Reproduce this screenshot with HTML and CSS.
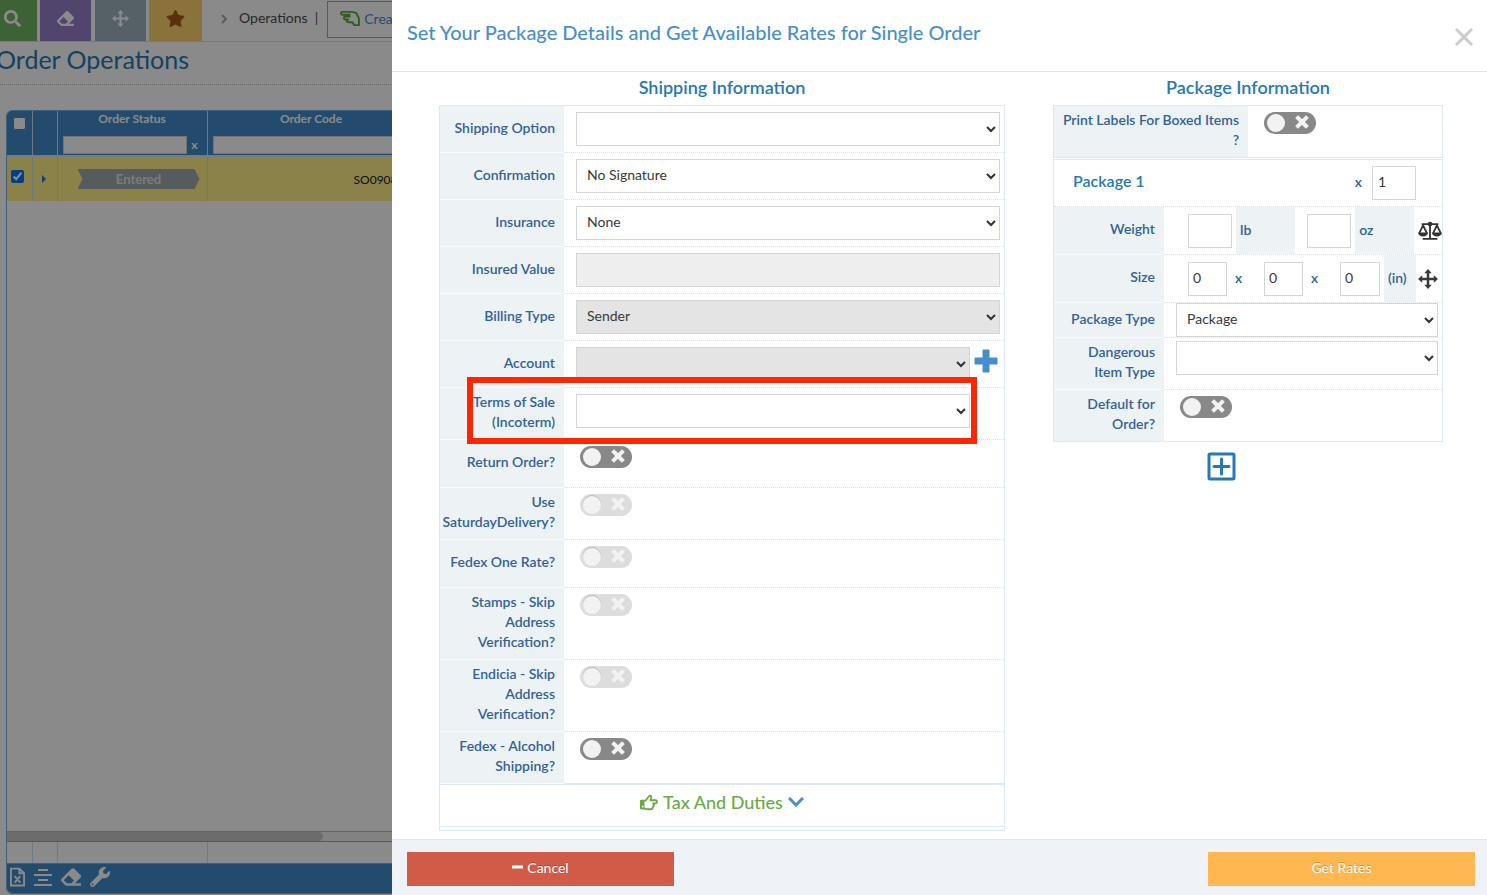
FILE: index.html
```
<!DOCTYPE html>
<html lang="en">
<head>
    <meta charset="UTF-8">
    <meta name="viewport" content="width=device-width, initial-scale=1.0">
    <title>Order Operations</title>
    <link rel="stylesheet" href="styles.css">
</head>
<body>
    <!-- Shared icons -->
    <svg class="sprite" aria-hidden="true">
        <symbol id="i-search" viewBox="0 0 512 512"><path d="M505 442.7L405.3 343c-4.5-4.5-10.6-7-17-7H372c27.6-35.3 44-79.7 44-128C416 93.1 322.9 0 208 0S0 93.1 0 208s93.1 208 208 208c48.3 0 92.7-16.4 128-44v16.3c0 6.4 2.5 12.5 7 17l99.7 99.7c9.4 9.4 24.6 9.4 33.9 0l28.3-28.3c9.4-9.4 9.4-24.6.1-34zM208 336c-70.7 0-128-57.2-128-128 0-70.7 57.2-128 128-128 70.7 0 128 57.2 128 128 0 70.7-57.2 128-128 128z"/></symbol>
        <symbol id="i-eraser" viewBox="0 0 512 512"><path d="M497.9 273.9c18.8-18.7 18.8-49.1 0-67.8l-160-160c-18.7-18.8-49.1-18.8-67.9 0l-256 256c-18.7 18.7-18.7 49.1 0 67.8l96 96A48 48 0 0 0 144 480h356c6.6 0 12-5.4 12-12v-40c0-6.6-5.4-12-12-12H355.9l142-142.1zM195.3 211.3l137.4 137.4L265.4 416H150.6l-80-80 124.7-124.7z"/></symbol>
        <symbol id="i-move" viewBox="0 0 24 24"><path d="M12 0l4.500 5h-3v5.500H19v-3l5 4.500-5 4.500v-3h-5.500V19h3L12 24l-4.500-5h3v-5.500H5v3L0 12l5-4.500v3h5.500V5h-3z"/></symbol>
        <symbol id="i-star" viewBox="0 0 576 512"><path d="M259.3 17.8L194 150.2 47.9 171.5c-26.2 3.8-36.7 36.1-17.7 54.6l105.7 103-25 145.500c-4.500 26.300 23.200 46 46.400 33.700L288 439.600l130.700 68.700c23.200 12.200 50.900-7.400 46.400-33.700l-25-145.500 105.700-103c19-18.500 8.500-50.800-17.700-54.600L382 150.200 316.700 17.800c-11.700-23.600-45.600-23.900-57.400 0z"/></symbol>
        <symbol id="i-wrench" viewBox="0 0 512 512"><path d="M507.700 109.100c-2.200-9-13.500-12.100-20.100-5.500l-74.400 74.400-67.900-11.300-11.300-67.900 74.400-74.400c6.600-6.600 3.400-17.900-5.700-20.200-47.400-11.700-99.600.9-136.600 37.900-39.600 39.600-50.500 97.100-34 147.200L18.700 402.800c-25 25-25 65.500 0 90.500s65.500 25 90.500 0l213.200-213.200c50.100 16.700 107.500 5.700 147.400-34.200 37.100-37.100 49.700-89.400 37.900-136.800zM64 472a24 24 0 1 1 0-48 24 24 0 0 1 0 48z"/></symbol>
        <symbol id="i-chevron" viewBox="0 0 16 10"><path d="M1 1l7 7 7-7" fill="none" stroke="currentColor" stroke-width="3"/></symbol>
    </svg>

    <div class="page">
        <div class="toolbar">
            <button class="tool tool-search" aria-label="Search"><svg><use href="#i-search"/></svg></button>
            <button class="tool tool-clear" aria-label="Clear"><svg><use href="#i-eraser"/></svg></button>
            <button class="tool tool-move" aria-label="Move"><svg><use href="#i-move"/></svg></button>
            <button class="tool tool-star" aria-label="Favorite"><svg class="star"><use href="#i-star"/></svg></button>
            <svg class="crumb-arrow" viewBox="0 0 8 10"><path d="M1 1l4 4-4 4" fill="none" stroke="#a3a7ae" stroke-width="2"/></svg>
            <span class="crumb">Operations&nbsp; |</span>
            <button class="create">
                <svg viewBox="0 0 22 18"><path d="M1 2h11l5 1 3 6v7h-5l-2-3H8.500a1.500 1.500 0 0 1 0-3h-3a1.500 1.500 0 0 1 0-3H11M2 2a1.500 1.500 0 0 0 1 3h8" fill="none" stroke="#5fa83e" stroke-width="2" stroke-linejoin="round"/></svg>
                Create
            </button>
        </div>
        <h1>Order Operations</h1>

        <div class="grid-box">
            <table class="grid">
                <thead>
                    <tr>
                        <th class="c-check" rowspan="2"><input type="checkbox" aria-label="Select all"></th>
                        <th class="c-sub" rowspan="2"></th>
                        <th class="c-status">Order Status</th>
                        <th class="c-code">Order Code</th>
                        <th></th>
                    </tr>
                    <tr class="filters">
                        <td><div><input type="text" aria-label="Filter status"><button>x</button></div></td>
                        <td><div><input type="text" aria-label="Filter code"></div></td>
                        <td></td>
                    </tr>
                </thead>
                <tbody>
                    <tr>
                        <td class="c-check"><input type="checkbox" aria-label="Select order" checked></td>
                        <td><span class="expand"></span></td>
                        <td><span class="status">Entered</span></td>
                        <td class="code">SO09080</td>
                        <td></td>
                    </tr>
                </tbody>
            </table>
            <div class="grid-space"></div>
            <div class="scrollbar"><div class="thumb"></div></div>
            <div class="totals"><i></i><i></i><i></i></div>
            <div class="pager">
                <svg viewBox="0 0 16 20" class="file"><path d="M1 1h9l5 5v13H1zM10 1v5h5M5 9l6 7M11 9l-6 7" fill="none" stroke="currentColor" stroke-width="2"/></svg>
                <svg viewBox="0 0 18 18" class="lines"><path d="M4 2h10M0 7h18M4 12h10M0 17h18" fill="none" stroke="currentColor" stroke-width="2"/></svg>
                <svg class="eraser"><use href="#i-eraser"/></svg>
                <svg class="wrench"><use href="#i-wrench"/></svg>
            </div>
        </div>
    </div>
    <div class="backdrop"></div>

    <div class="modal" role="dialog" aria-labelledby="modal-title">
        <header class="modal-header">
            <h2 id="modal-title">Set Your Package Details and Get Available Rates for Single Order</h2>
            <button class="close" aria-label="Close"><svg viewBox="0 0 18 18"><path d="M1 1l16 16M17 1L1 17" fill="none" stroke="#ccc" stroke-width="3"/></svg></button>
        </header>

        <div class="modal-body">
            <section>
                <h3>Shipping Information</h3>
                <div class="panel">
                    <div class="row"><label for="option">Shipping Option</label><div class="cell"><select id="option"><option></option></select></div></div>
                    <div class="row"><label for="confirmation">Confirmation</label><div class="cell"><select id="confirmation"><option>No Signature</option></select></div></div>
                    <div class="row"><label for="insurance">Insurance</label><div class="cell"><select id="insurance"><option>None</option></select></div></div>
                    <div class="row"><label for="insured">Insured Value</label><div class="cell"><input type="text" id="insured" disabled></div></div>
                    <div class="row"><label for="billing">Billing Type</label><div class="cell"><select id="billing" disabled><option>Sender</option></select></div></div>
                    <div class="row">
                        <label for="account">Account</label>
                        <div class="cell side">
                            <select id="account" disabled><option></option></select>
                            <button class="add" aria-label="Add account"><svg viewBox="0 0 24 24"><path d="M9 1h6v8h8v6h-8v8H9v-8H1V9h8z" fill="#478fca" stroke="#478fca" stroke-linejoin="round"/></svg></button>
                        </div>
                    </div>
                    <div class="row marked">
                        <label for="terms">Terms of Sale (Incoterm)</label>
                        <div class="cell side"><select id="terms"><option></option></select></div>
                        <div class="marker"></div>
                    </div>
                    <div class="row"><label for="return">Return Order?</label><div class="cell"><input type="checkbox" class="switch" id="return"></div></div>
                    <div class="row"><label for="saturday">Use SaturdayDelivery?</label><div class="cell"><input type="checkbox" class="switch" id="saturday" disabled></div></div>
                    <div class="row"><label for="onerate">Fedex One Rate?</label><div class="cell"><input type="checkbox" class="switch" id="onerate" disabled></div></div>
                    <div class="row"><label for="stamps">Stamps - Skip Address Verification?</label><div class="cell"><input type="checkbox" class="switch" id="stamps" disabled></div></div>
                    <div class="row"><label for="endicia">Endicia - Skip Address Verification?</label><div class="cell"><input type="checkbox" class="switch" id="endicia" disabled></div></div>
                    <div class="row last"><label for="alcohol">Fedex - Alcohol Shipping?</label><div class="cell"><input type="checkbox" class="switch" id="alcohol"></div></div>
                    <button class="tax">
                        <svg class="hand" viewBox="0 0 20 18"><path d="M1 7h4v9H1z" fill="#69aa46"/><path d="M1 7h5l4-5c1-1.500 3 0 2.500 1.500L11.500 6.500H17c2.500 0 2.500 3.500 0 3.500h-2.500c1.500 0 1.500 2.500 0 2.500 1 .5.5 2.200-.5 2.200 0 1.300-.8 1.800-2 1.800H9c-2 0-2.500-.8-4-.8H1z" fill="none" stroke="#69aa46" stroke-width="2" stroke-linejoin="round"/><circle cx="3" cy="13.500" r="1" fill="#fff"/></svg>
                        Tax And Duties
                        <svg class="down"><use href="#i-chevron"/></svg>
                    </button>
                </div>
            </section>

            <section>
                <h3>Package Information</h3>
                <div class="panel">
                    <div class="row wide"><label for="boxed">Print Labels For Boxed Items ?</label><div class="cell"><input type="checkbox" class="switch" id="boxed"></div></div>
                </div>
                <div class="panel package">
                    <div class="package-head">
                        <h4>Package 1</h4>
                        <label for="count">x</label>
                        <input type="text" id="count" value="1">
                    </div>
                    <div class="row">
                        <label for="lb">Weight</label>
                        <div class="measure">
                            <input type="text" id="lb">
                            <label class="unit" for="lb">lb</label>
                            <input type="text" id="oz">
                            <label class="unit" for="oz">oz</label>
                            <svg class="scale" viewBox="0 0 26 20"><path d="M4 2.500h18M13 2v16M5 18.500h16" fill="none" stroke="#333" stroke-width="2"/><circle cx="13" cy="2.500" r="2.500" fill="#333"/><path d="M5.500 4L1.500 12M5.500 4l4 8M20.500 4l-4 8M20.500 4l4 8" fill="none" stroke="#333" stroke-width="2"/><path d="M0 11.500h11a5.500 4.500 0 0 1-11 0zM15 11.500h11a5.500 4.500 0 0 1-11 0z" fill="#333"/></svg>
                        </div>
                    </div>
                    <div class="row">
                        <label for="length">Size</label>
                        <div class="measure size">
                            <input type="text" id="length" value="0"><span>x</span>
                            <input type="text" aria-label="Width" value="0"><span>x</span>
                            <input type="text" aria-label="Height" value="0">
                            <span class="unit">(in)</span>
                            <svg class="move"><use href="#i-move"/></svg>
                        </div>
                    </div>
                    <div class="row tight"><label for="type">Package Type</label><div class="cell"><select id="type"><option>Package</option></select></div></div>
                    <div class="row danger"><label for="danger">Dangerous Item Type</label><div class="cell"><select id="danger"><option></option></select></div></div>
                    <div class="row"><label for="default">Default for Order?</label><div class="cell"><input type="checkbox" class="switch" id="default"></div></div>
                </div>
                <div class="more">
                    <button aria-label="Add package"><svg viewBox="0 0 29 29"><g fill="none" stroke="#2679b5" stroke-width="3"><rect x="2" y="2" width="25" height="25" rx="1"/><path d="M14.500 7v15M7 14.500h15" stroke-linecap="round"/></g></svg></button>
                </div>
            </section>
        </div>

        <footer class="modal-footer">
            <button class="btn cancel"><svg viewBox="0 0 11 4"><path d="M0 2h11" stroke="#fff" stroke-width="3"/></svg>Cancel</button>
            <button class="btn rates">Get Rates</button>
        </footer>
    </div>
</body>
</html>
```

FILE: styles.css
```
* {
    box-sizing: border-box;
}
body {
    margin: 0;
    height: 100vh;
    overflow: hidden;
    font-family: Lato, "Open Sans", sans-serif;
    font-size: 14px;
    color: #393939;
    background: #fff;
}
button {
    font: inherit;
    border: 0;
    padding: 0;
    background: none;
    cursor: pointer;
}
svg {
    display: block;
    fill: currentColor;
    flex: none;
}
.sprite {
    position: absolute;
    width: 0;
    height: 0;
}
select,
input[type="text"] {
    width: 100%;
    height: 34px;
    padding: 0 11px 3px 10px;
    font: inherit;
    color: #393939;
    background-color: #fff;
    border: 1px solid #d5d5d5;
    border-radius: 0;
}
select {
    display: block;
    appearance: none;
    background-image: url("data:image/svg+xml,%3Csvg xmlns='http://www.w3.org/2000/svg' width='10' height='7'%3E%3Cpath d='M1 1l4 4 4-4' fill='none' stroke='%23333' stroke-width='2'/%3E%3C/svg%3E");
    background-repeat: no-repeat;
    background-position: right 3px center;
}
select:disabled {
    background-color: #e4e4e4;
    opacity: 1;
}
input[type="text"]:disabled {
    background-color: #eee;
}

/* Page behind the dialog */
.page {
    height: 100vh;
    display: flex;
    flex-direction: column;
}
.toolbar {
    display: flex;
    align-items: center;
    height: 42px;
    border-bottom: 1px solid #e0e0e0;
}
.tool {
    width: 51px;
    height: 41px;
    margin-right: 4px;
    display: flex;
    align-items: center;
    justify-content: center;
    padding-bottom: 4px;
    color: #fff;
}
.tool svg {
    width: 17px;
    height: 17px;
}
.tool-search {
    width: 37px;
    margin-right: 3px;
    padding-right: 13px;
    background: #6fb565;
}
.tool-clear {
    background: #9680cc;
}
.tool-move {
    background: #a0b4bf;
    margin-right: 3px;
}
.tool-star {
    width: 53px;
    background: #ffd56e;
    color: #a65a1e;
}
.tool .star {
    width: 19px;
}
.crumb-arrow {
    width: 8px;
    height: 10px;
    margin: 0 10px 4px 15px;
}
.crumb {
    padding-bottom: 6px;
    margin-right: 9px;
    color: #4c4c4c;
}
.create {
    display: flex;
    align-items: center;
    gap: 3px;
    width: 120px;
    height: 37px;
    margin-bottom: 2px;
    padding: 0 0 2px 12px;
    border: 1px solid #6fb3e0;
    color: #478fca;
    background: #fff;
}
.create svg {
    width: 21px;
    height: 17px;
}
h1 {
    margin: 0 0 25px -4px;
    height: 43px;
    font-size: 25px;
    line-height: 34px;
    font-weight: 400;
    color: #2679b5;
    border-bottom: 1px dotted #bbb;
}
.grid-box {
    flex: 1;
    display: flex;
    flex-direction: column;
    margin: 0 0 1px 6px;
    border: 1px solid #74b0d8;
    border-radius: 6px;
    overflow: hidden;
}
.grid {
    border-collapse: collapse;
    table-layout: fixed;
    width: 100%;
}
.grid th,
.grid td {
    padding: 0;
    border-right: 1px solid #cfe0ea;
}
.grid thead {
    background: #428bca;
    color: #fff;
}
.grid th {
    height: 23px;
    font-size: 12px;
    line-height: 16px;
    vertical-align: top;
}
.grid .c-check {
    width: 25px;
    text-align: left;
}
.c-sub {
    width: 25px;
}
.c-status {
    width: 150px;
}
.c-code {
    width: 208px;
}
.grid input[type="checkbox"] {
    margin: 6px;
}
.filters div {
    display: flex;
    align-items: center;
    gap: 4px;
    height: 21px;
    padding: 2px 9px 1px 5px;
}
.filters input[type="text"] {
    flex: 1;
    min-width: 0;
    height: 18px;
    padding: 0 4px;
}
.filters button {
    font-size: 12px;
    font-weight: 700;
    line-height: 12px;
    color: #fff;
}
.grid tbody td {
    height: 45px;
    background: #fff086;
    border-top: 2px solid #d9e6ee;
}
.grid tbody input[type="checkbox"] {
    margin: 0 4px 6px;
}
.expand {
    display: block;
    margin-left: 9px;
    width: 0;
    border: 4px solid transparent;
    border-left-color: #2a6be0;
    border-right-width: 0;
}
.status {
    display: block;
    width: 122px;
    margin-left: 20px;
    line-height: 20px;
    font-weight: 700;
    font-size: 13px;
    text-align: center;
    color: #e4e4e4;
    background: #a0a9ae;
    clip-path: polygon(0 0, 117px 0, 100% 50%, 117px 100%, 0 100%, 5px 50%);
}
.grid .code {
    padding-right: 10px;
    text-align: right;
    font-size: 12px;
    color: #222;
}
.grid-space {
    flex: 1;
}
.scrollbar {
    height: 10px;
    border-top: 1px solid #bbb;
    background: #f0f0f0;
}
.thumb {
    width: 316px;
    height: 9px;
    border-radius: 0 5px 5px 0;
    background: #c8c8c8;
}
.totals {
    display: grid;
    grid-template-columns: 26px 25px 150px;
    height: 23px;
    border-top: 1px solid #74b0d8;
    border-bottom: 1px solid #74b0d8;
}
.totals i {
    border-right: 1px solid #cfe0ea;
}
.pager {
    display: flex;
    align-items: center;
    gap: 9px;
    height: 29px;
    padding: 0 0 3px 3px;
    color: #fff;
    background: #428bca;
}
.file {
    width: 15px;
    height: 20px;
}
.lines {
    width: 18px;
    height: 18px;
}
.eraser,
.wrench {
    width: 20px;
    height: 20px;
}
.backdrop {
    position: fixed;
    inset: 0;
    background: rgba(0, 0, 0, 0.46);
}

/* Dialog */
.modal {
    position: fixed;
    inset: 0 0 0 392px;
    display: flex;
    flex-direction: column;
    background: #fff;
}
.modal-header {
    display: flex;
    justify-content: space-between;
    height: 72px;
    padding: 19px 14px 0 15px;
    border-bottom: 1px solid #e5e5e5;
}
h2 {
    margin: 0;
    font-size: 20px;
    line-height: 26px;
    font-weight: 500;
    color: #478fca;
}
.close svg {
    width: 18px;
    height: 18px;
}
.modal-header .close {
    align-self: flex-start;
    margin-top: 9px;
}
.modal-body {
    flex: 1;
    display: grid;
    grid-template-columns: 566fr 390fr;
    align-items: start;
    gap: 48px;
    padding: 2px 44px 0 47px;
}
h3 {
    margin: 0;
    padding-bottom: 5px;
    text-align: center;
    font-size: 18px;
    line-height: 26px;
    font-weight: 600;
    color: #2679b5;
}
.panel {
    border: 1px solid #dceaf4;
}
.row {
    display: grid;
    grid-template-columns: 124px 1fr;
    min-height: 48px;
}
.row > label {
    display: flex;
    align-items: center;
    justify-content: flex-end;
    padding: 4px 9px 7px 0;
    text-align: right;
    font-size: 14px;
    line-height: 20px;
    font-weight: 600;
    color: #336199;
    background: #edf3f4;
    border-bottom: 1px solid #f7fbff;
}
.cell {
    padding: 6px 4px 6px 12px;
    border-bottom: 1px dotted #d3e2ee;
}
.row:has(select),
.row:has(#insured) {
    min-height: 47px;
}
.side {
    display: flex;
    align-items: flex-start;
    gap: 4px;
    padding-right: 6px;
}
.side select {
    flex: 1;
}
.marked .side {
    padding-right: 34px;
}
.add {
    width: 24px;
    height: 24px;
    margin-top: 2px;
}
.marked {
    position: relative;
}
/* Red highlight drawn over the neighbouring rows */
.marker {
    position: absolute;
    inset: -11px 27px -4px;
    border: 6px solid #fc2603;
    pointer-events: none;
}
.switch {
    appearance: none;
    display: block;
    width: 52px;
    height: 22px;
    margin: 0 4px;
    border-radius: 11px;
    background: #888 url("data:image/svg+xml,%3Csvg xmlns='http://www.w3.org/2000/svg' width='14' height='14'%3E%3Cpath d='M3 3l8 8M11 3l-8 8' fill='none' stroke='%23f2f2f2' stroke-width='4' stroke-linecap='square' stroke-linejoin='round'/%3E%3C/svg%3E") no-repeat 31px 3px / 14px 14px;
}
.switch::before {
    content: "";
    display: block;
    width: 18px;
    height: 18px;
    margin: 2px 3px;
    border-radius: 50%;
    background: #f2f2f2;
}
.switch:disabled {
    background-color: #ddd;
}
.switch:disabled::before {
    box-shadow: 0 -1px 1px #bbb;
}
.last > * {
    border-bottom: 1px solid #dceaf4;
}
.tax {
    display: flex;
    align-items: flex-start;
    justify-content: center;
    gap: 5px;
    width: 100%;
    height: 43px;
    margin-bottom: 3px;
    padding-top: 4px;
    font-size: 18px;
    line-height: 26px;
    font-weight: 500;
    color: #69aa46;
    border-top: 1px solid #dceaf4;
    border-bottom: 1px solid #dceaf4;
}
.hand {
    width: 18px;
    height: 17px;
    margin-top: 5px;
}
.down {
    width: 16px;
    height: 10px;
    margin-top: 8px;
    color: #478fca;
}

/* Package panel */
.panel .wide {
    grid-template-columns: 1fr 1fr;
    min-height: 51px;
}
.panel > .wide > * {
    border-bottom: 0;
}
.package {
    margin-top: 1px;
}
.package .row {
    grid-template-columns: 110px 1fr;
}
.package .row > label {
    padding-left: 14px;
}
.package-head {
    display: flex;
    align-items: center;
    gap: 10px;
    height: 47px;
    padding: 0 26px 0 19px;
    border-bottom: 1px dotted #d3e2ee;
}
h4 {
    flex: 1;
    margin: 0 0 6px;
    font-size: 16px;
    font-weight: 600;
    color: #2679b5;
}
.package-head label,
.measure span,
.measure .unit {
    padding-bottom: 3px;
    font-size: 14px;
    font-weight: 600;
    color: #336199;
}
.package-head input[type="text"] {
    width: 44px;
    padding: 0 5px 3px;
}
.measure {
    display: grid;
    grid-template-columns: 44px 8fr 44px 7fr 24px;
    column-gap: 4px;
    align-items: center;
    padding-left: 24px;
    border-bottom: 1px dotted #d3e2ee;
}
.measure input[type="text"] {
    padding: 0 4px 3px;
}
.measure .unit {
    align-self: stretch;
    display: flex;
    align-items: center;
    padding-inline: 4px;
    background: #edf3f4;
}
.measure label.unit:nth-of-type(1) {
    margin-right: 8px;
}
.scale {
    width: 24px;
    height: 20px;
}
.size {
    grid-template-columns: 39px 1fr 39px 1fr 40px 32px 22px;
}
.size > span:not(.unit) {
    padding-left: 4px;
}
.move {
    width: 20px;
    height: 20px;
    margin-left: -2px;
}
.package .tight {
    min-height: 35px;
}
.tight > label {
    padding-block: 0 3px;
}
.tight .cell {
    padding-block: 0;
}
.danger .cell {
    padding-top: 3px;
}
.package .row:last-child > * {
    border-bottom: 0;
}
.more {
    display: flex;
    justify-content: center;
    padding: 10px 53px 0 0;
}
.more svg {
    width: 29px;
    height: 29px;
}

/* Footer */
.modal-footer {
    display: flex;
    justify-content: space-between;
    padding: 12px 12px 9px 15px;
    background: #eff2f7;
    border-top: 1px solid #e4e9ee;
}
.btn {
    display: flex;
    align-items: center;
    justify-content: center;
    gap: 4px;
    width: 267px;
    height: 34px;
    padding-bottom: 4px;
    color: #fff;
    font-size: 14px;
    text-shadow: 0 -1px 0 rgba(0, 0, 0, 0.2);
}
.btn svg {
    width: 11px;
    height: 4px;
}
.cancel {
    background: #d15b47;
}
.rates {
    background: #ffb752;
}
```
